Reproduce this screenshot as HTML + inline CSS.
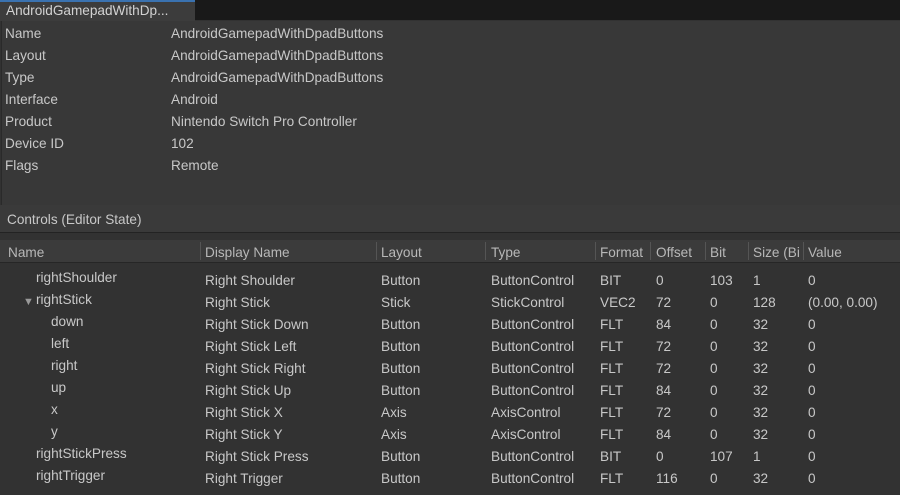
<!DOCTYPE html><html><head><style>
body{margin:0;width:900px;height:495px;background:#323232;font-family:"Liberation Sans",sans-serif;font-size:13.6px;color:#c8c8c8;overflow:hidden;position:relative}
.a{position:absolute;white-space:nowrap}
</style></head><body>
<div class="a" style="left:0;top:0;width:900px;height:20px;background:#191919"></div>
<div class="a" style="left:0;top:0;width:195px;height:21px;background:#3c3c3c;border-top:2px solid #3a72b0;box-sizing:border-box"></div>
<div class="a" style="left:6px;top:3px;color:#d2d2d2">AndroidGamepadWithDp...</div>
<div class="a" style="left:1px;top:21px;width:899px;height:184px;background:#383838;border-left:1px solid #2a2a2a"></div>
<div class="a" style="left:0;top:205px;width:900px;height:27px;background:#3a3a3a;border-bottom:1px solid #232323"></div>
<div class="a" style="left:7px;top:212px">Controls (Editor State)</div>
<div class="a" style="left:0;top:240px;width:900px;height:22px;background:#3b3b3b;border-bottom:1px solid #262626"></div>
<div id="t"></div>
<script>
var info=[["Name","AndroidGamepadWithDpadButtons"],["Layout","AndroidGamepadWithDpadButtons"],["Type","AndroidGamepadWithDpadButtons"],["Interface","Android"],["Product","Nintendo Switch Pro Controller"],["Device ID","102"],["Flags","Remote"]];
var h="";
info.forEach(function(r,i){var y=26+i*22;h+='<div class="a" style="left:5px;top:'+y+'px">'+r[0]+'</div><div class="a" style="left:171px;top:'+y+'px">'+r[1]+'</div>';});
var cx=[8,205,381,491,600,656,710,753,808],dv=[200,376,485,595,650,705,748,803];
var hd=["Name","Display Name","Layout","Type","Format","Offset","Bit","Size (Bi","Value"];
hd.forEach(function(t,i){h+='<div class="a" style="left:'+cx[i]+'px;top:245px;color:#b8b8b8">'+t+'</div>';});
dv.forEach(function(x){h+='<div class="a" style="left:'+x+'px;top:242px;width:1px;height:18px;background:#555"></div>';});
var rows=[[36,"rightShoulder","Right Shoulder","Button","ButtonControl","BIT","0","103","1","0"],
[36,"rightStick","Right Stick","Stick","StickControl","VEC2","72","0","128","(0.00, 0.00)"],
[51,"down","Right Stick Down","Button","ButtonControl","FLT","84","0","32","0"],
[51,"left","Right Stick Left","Button","ButtonControl","FLT","72","0","32","0"],
[51,"right","Right Stick Right","Button","ButtonControl","FLT","72","0","32","0"],
[51,"up","Right Stick Up","Button","ButtonControl","FLT","84","0","32","0"],
[51,"x","Right Stick X","Axis","AxisControl","FLT","72","0","32","0"],
[51,"y","Right Stick Y","Axis","AxisControl","FLT","84","0","32","0"],
[36,"rightStickPress","Right Stick Press","Button","ButtonControl","BIT","0","107","1","0"],
[36,"rightTrigger","Right Trigger","Button","ButtonControl","FLT","116","0","32","0"]];
rows.forEach(function(r,i){var y=273+i*22;
h+='<div class="a" style="left:'+r[0]+'px;top:'+(y-3)+'px">'+r[1]+'</div>';
for(var j=2;j<10;j++)h+='<div class="a" style="left:'+cx[j-1]+'px;top:'+y+'px">'+r[j]+'</div>';});
h+='<div class="a" style="left:23px;top:296px;font-size:11px;color:#999">&#9660;</div>';
document.getElementById('t').innerHTML=h;
</script>
</body></html>
